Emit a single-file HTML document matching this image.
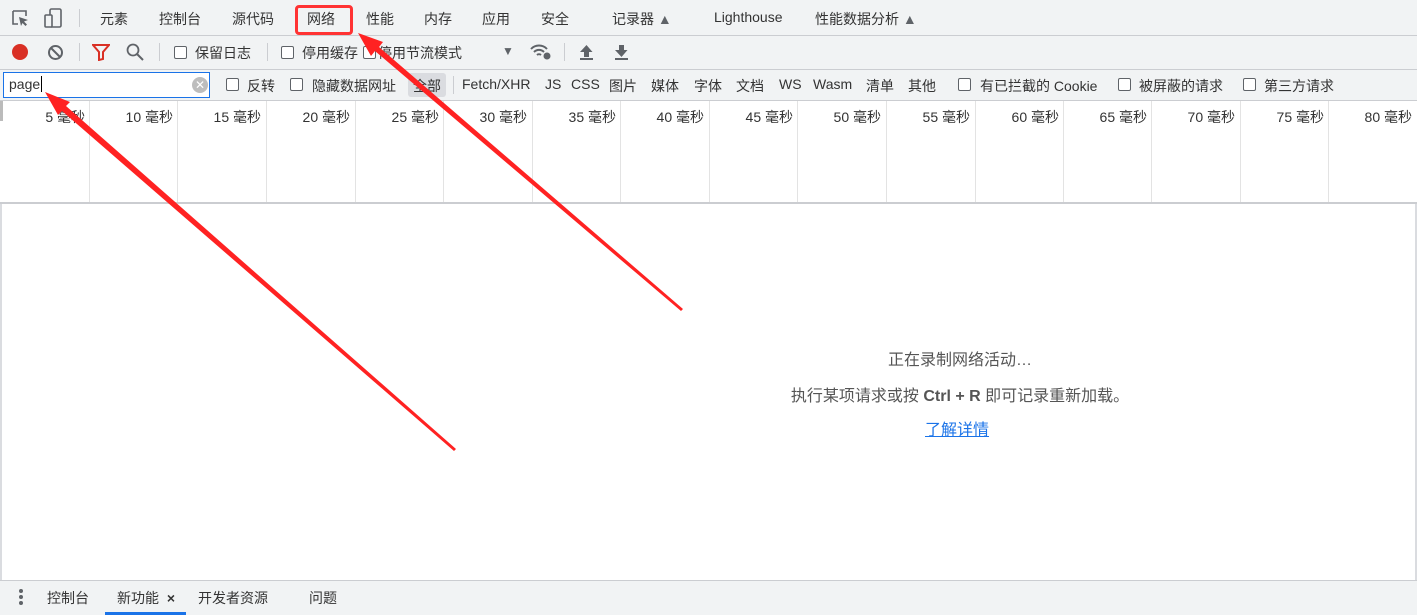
<!DOCTYPE html><html><head><meta charset="utf-8"><style>
*{margin:0;padding:0;box-sizing:border-box}
body{width:1417px;height:615px;position:relative;overflow:hidden;background:#fff;font-family:"Liberation Sans","Noto Sans CJK SC",sans-serif;font-size:14px;color:#333}
.a{position:absolute;white-space:nowrap}
.bar{position:absolute;left:0;width:1417px;background:#f1f3f4;border-bottom:1px solid #cbcdd1}
.cb{position:absolute;width:13px;height:13px;border:1px solid #5f6368;border-radius:2px;background:#fff}
.sep{position:absolute;width:1px;background:#cbcdd1}
.vl{position:absolute;top:101px;height:101px;width:1px;background:#e3e3e3}
.t{position:absolute;top:107px;font-size:14px;color:#333;text-align:right;width:80px}
</style></head><body>
<div class="a" style="left:0;top:0;width:140px;height:2px;background:#c0392b;opacity:.6"></div>
<div class="bar" style="top:0;height:36px"></div>
<div class="bar" style="top:36px;height:34px"></div>
<div class="bar" style="top:70px;height:31px;background:#f1f3f4"></div>
<svg class="a" style="left:11px;top:9px" width="20" height="20"><path d="M2 2h13v5M2 2v13h5" fill="none" stroke="#5f6368" stroke-width="1.6"/><path d="M8 8l9 3-4 1.5 3 3-1.5 1.5-3-3L10 17z" fill="#5f6368"/></svg>
<svg class="a" style="left:44px;top:8px" width="20" height="22"><rect x="6" y="1" width="11" height="18" rx="1.5" fill="none" stroke="#5f6368" stroke-width="1.6"/><rect x="1" y="7" width="7" height="12" rx="1" fill="#f1f3f4" stroke="#5f6368" stroke-width="1.6"/></svg>
<div class="sep" style="left:79px;top:9px;height:18px"></div>
<div class="a" style="left:100px;top:9px">元素</div>
<div class="a" style="left:159px;top:9px">控制台</div>
<div class="a" style="left:232px;top:9px">源代码</div>
<div class="a" style="left:307px;top:9px">网络</div>
<div class="a" style="left:295px;top:5px;width:58px;height:30px;border:3px solid #f33;border-radius:4px"></div>
<div class="a" style="left:366px;top:9px">性能</div>
<div class="a" style="left:424px;top:9px">内存</div>
<div class="a" style="left:482px;top:9px">应用</div>
<div class="a" style="left:541px;top:9px">安全</div>
<div class="a" style="left:612px;top:9px">记录器 <span style="color:#5f6368">▲</span></div>
<div class="a" style="left:714px;top:9px">Lighthouse</div>
<div class="a" style="left:815px;top:9px">性能数据分析 <span style="color:#5f6368">▲</span></div>
<div class="a" style="left:12px;top:44px;width:16px;height:16px;border-radius:50%;background:#d93025"></div>
<svg class="a" style="left:47px;top:44px" width="17" height="17"><circle cx="8.5" cy="8.5" r="6.5" fill="none" stroke="#5f6368" stroke-width="2"/><path d="M4 4l9 9" stroke="#5f6368" stroke-width="2"/></svg>
<div class="sep" style="left:79px;top:43px;height:18px"></div>
<svg class="a" style="left:92px;top:44px" width="18" height="17"><path d="M1 1h16l-6 7v7l-4 1V8z" fill="none" stroke="#d93025" stroke-width="2"/></svg>
<svg class="a" style="left:126px;top:43px" width="19" height="19"><circle cx="7" cy="7" r="5.5" fill="none" stroke="#5f6368" stroke-width="1.8"/><path d="M11 11l6 6" stroke="#5f6368" stroke-width="2"/></svg>
<div class="sep" style="left:159px;top:43px;height:18px"></div>
<div class="cb" style="left:174px;top:46px"></div><div class="a" style="left:195px;top:43px">保留日志</div>
<div class="sep" style="left:267px;top:43px;height:18px"></div>
<div class="cb" style="left:281px;top:46px"></div><div class="a" style="left:302px;top:43px">停用缓存</div>
<div class="cb" style="left:363px;top:46px"></div><div class="a" style="left:378px;top:43px">停用节流模式</div>
<div class="a" style="left:502px;top:44px;color:#5f6368;font-size:12px">▼</div>
<svg class="a" style="left:529px;top:43px" width="24" height="18"><path d="M2 6a11 11 0 0 1 16 0M5 9a7 7 0 0 1 10 0M8 12a3 3 0 0 1 4 0" fill="none" stroke="#5f6368" stroke-width="2"/><circle cx="18" cy="13" r="3.5" fill="#5f6368"/></svg>
<div class="sep" style="left:564px;top:43px;height:18px"></div>
<svg class="a" style="left:579px;top:44px" width="15" height="16"><path d="M7.5 1l6 7H10v5H5V8H1z" fill="#5f6368"/><rect x="1" y="14" width="13" height="2" fill="#5f6368"/></svg>
<svg class="a" style="left:614px;top:44px" width="15" height="16"><path d="M7.5 13l6-7H10V1H5v5H1z" fill="#5f6368"/><rect x="1" y="14" width="13" height="2" fill="#5f6368"/></svg>
<div class="a" style="left:3px;top:72px;width:207px;height:26px;border:1px solid #1a73e8;background:#fff"></div>
<div class="a" style="left:9px;top:76px">page<span style="border-left:1px solid #000;margin-left:1px"></span></div>
<div class="a" style="left:192px;top:77px;width:16px;height:16px;border-radius:50%;background:#bdbdbd;color:#fff;font-size:12px;line-height:16px;text-align:center">✕</div>
<div class="cb" style="left:226px;top:78px"></div><div class="a" style="left:247px;top:76px">反转</div>
<div class="cb" style="left:290px;top:78px"></div><div class="a" style="left:312px;top:76px">隐藏数据网址</div>
<div class="a" style="left:408px;top:73px;width:38px;height:24px;background:#dadce0;border-radius:3px"></div>
<div class="a" style="left:413px;top:76px">全部</div>
<div class="sep" style="left:453px;top:76px;height:18px"></div>
<div class="a" style="left:462px;top:76px">Fetch/XHR</div><div class="a" style="left:545px;top:76px">JS</div><div class="a" style="left:571px;top:76px">CSS</div><div class="a" style="left:609px;top:76px">图片</div><div class="a" style="left:651px;top:76px">媒体</div><div class="a" style="left:694px;top:76px">字体</div><div class="a" style="left:736px;top:76px">文档</div><div class="a" style="left:779px;top:76px">WS</div><div class="a" style="left:813px;top:76px">Wasm</div><div class="a" style="left:866px;top:76px">清单</div><div class="a" style="left:908px;top:76px">其他</div>
<div class="cb" style="left:958px;top:78px"></div><div class="a" style="left:980px;top:76px">有已拦截的 Cookie</div>
<div class="cb" style="left:1118px;top:78px"></div><div class="a" style="left:1139px;top:76px">被屏蔽的请求</div>
<div class="cb" style="left:1243px;top:78px"></div><div class="a" style="left:1264px;top:76px">第三方请求</div>
<div class="a" style="left:0;top:101px;width:3px;height:20px;background:#bbb"></div>
<div class="vl" style="left:89px"></div><div class="vl" style="left:177px"></div><div class="vl" style="left:266px"></div><div class="vl" style="left:355px"></div><div class="vl" style="left:443px"></div><div class="vl" style="left:532px"></div><div class="vl" style="left:620px"></div><div class="vl" style="left:709px"></div><div class="vl" style="left:797px"></div><div class="vl" style="left:886px"></div><div class="vl" style="left:975px"></div><div class="vl" style="left:1063px"></div><div class="vl" style="left:1151px"></div><div class="vl" style="left:1240px"></div><div class="vl" style="left:1328px"></div>
<div class="t" style="left:5px">5 毫秒</div><div class="t" style="left:93px">10 毫秒</div><div class="t" style="left:181px">15 毫秒</div><div class="t" style="left:270px">20 毫秒</div><div class="t" style="left:359px">25 毫秒</div><div class="t" style="left:447px">30 毫秒</div><div class="t" style="left:536px">35 毫秒</div><div class="t" style="left:624px">40 毫秒</div><div class="t" style="left:713px">45 毫秒</div><div class="t" style="left:801px">50 毫秒</div><div class="t" style="left:890px">55 毫秒</div><div class="t" style="left:979px">60 毫秒</div><div class="t" style="left:1067px">65 毫秒</div><div class="t" style="left:1155px">70 毫秒</div><div class="t" style="left:1244px">75 毫秒</div><div class="t" style="left:1332px">80 毫秒</div>
<div class="a" style="left:0;top:202px;width:1417px;height:2px;background:#cbcdd1"></div>
<div class="a" style="left:0;top:204px;width:2px;height:376px;background:#dadce0"></div>
<div class="a" style="left:1415px;top:204px;width:2px;height:376px;background:#dadce0"></div>
<div class="a" style="left:0;top:346px;width:1417px;text-align:center;font-size:16px;color:#555;padding-left:503px">正在录制网络活动…</div>
<div class="a" style="left:0;top:382px;width:1417px;text-align:center;font-size:16px;color:#555;padding-left:503px">执行某项请求或按 <b>Ctrl + R</b> 即可记录重新加载。</div>
<div class="a" style="left:925px;top:416px;font-size:16px;color:#1a73e8;text-decoration:underline">了解详情</div>
<div class="bar" style="top:580px;height:35px;border-top:1px solid #cbcdd1;border-bottom:none"></div>
<div class="a" style="left:19px;top:589px;width:4px;height:4px;border-radius:50%;background:#5f6368;box-shadow:0 6px 0 #5f6368,0 12px 0 #5f6368"></div>
<div class="a" style="left:47px;top:588px">控制台</div>
<div class="a" style="left:117px;top:588px">新功能 <b style="margin-left:4px">×</b></div>
<div class="a" style="left:105px;top:612px;width:81px;height:3px;background:#1a73e8"></div>
<div class="a" style="left:198px;top:588px">开发者资源</div>
<div class="a" style="left:309px;top:588px">问题</div>
<svg class="a" style="left:0;top:0" width="1417" height="615">
<polygon points="45,92 70,102 66,106 456,449 454,451 62,111 58,115" fill="#f22"/>
<polygon points="358,33 383,42 379,47 683,309 681,311 375,51 371,56" fill="#f22"/>
</svg>
</body></html>
